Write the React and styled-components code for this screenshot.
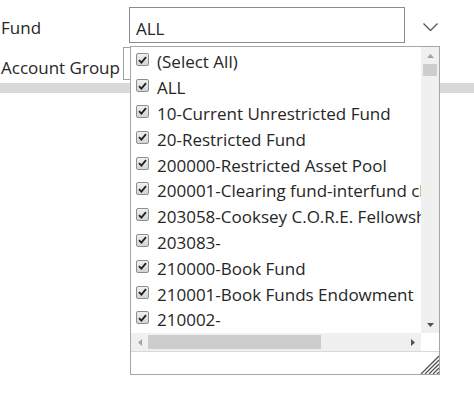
import React from "react";
import styled, { createGlobalStyle } from "styled-components";

const GlobalStyle = createGlobalStyle`
  html, body { margin: 0; padding: 0; background: #fff; }
  body { font-family: "Open Sans", "Noto Sans", sans-serif; color: #262626; }
  * { box-sizing: border-box; }
`;

const Page = styled.div`
  position: relative;
  width: 474px;
  height: 394px;
  overflow: hidden;
  padding-top: 7px;
`;

const Row = styled.div`
  display: flex;
  align-items: ${(p) => p.$align || "center"};
  margin-top: ${(p) => p.$mt || 0}px;
`;

const Label = styled.div`
  width: ${(p) => p.$w}px;
  padding-left: 1px;
  padding-top: ${(p) => p.$pt || 0}px;
  padding-bottom: ${(p) => p.$pb || 0}px;
  font-size: 17px;
  line-height: 22px;
  white-space: nowrap;
`;

const InputBox = styled.div`
  width: ${(p) => p.$w}px;
  height: ${(p) => p.$h}px;
  border: 1px solid ${(p) => p.$border || "#8c8c8c"};
  display: flex;
  align-items: center;
  padding-left: 6px;
  padding-top: 6px;
  font-size: 17px;
`;

const Chevron = styled.div`
  margin-left: 18px;
  padding-top: 4px;
  display: flex;
`;

const GrayBar = styled.div`
  margin-top: 3px;
  height: 10px;
  background: #d9d9d9;
`;

const Dropdown = styled.div`
  position: absolute;
  left: 130px;
  top: 46px;
  width: 310px;
  height: 329px;
  border: 1px solid #a6a6a6;
  background: #fff;
  display: grid;
  grid-template-columns: 290px 18px;
  grid-template-rows: 286px 18px 1fr;
`;

const List = styled.div`
  overflow: hidden;
  padding-top: 2px;
`;

const Item = styled.div`
  display: flex;
  align-items: center;
  height: 25.8px;
  padding-left: 5px;
  white-space: nowrap;
  font-size: 17px;
`;

const Check = styled.span`
  flex: none;
  width: 13px;
  height: 13px;
  border: 1px solid #8e8e8e;
  border-radius: 2px;
  background: linear-gradient(#f0f0f0, #d4d4d4);
  margin-right: 8px;
  margin-top: -4px;
  display: flex;
  align-items: center;
  justify-content: center;
`;

const VScroll = styled.div`
  background: #f0f0f0;
  display: flex;
  flex-direction: column;
  align-items: center;
  padding: 0 2px;
`;

const HScroll = styled.div`
  background: #f0f0f0;
  display: flex;
  align-items: center;
  padding: 2px 0;
`;

const ArrowCell = styled.div`
  flex: none;
  width: ${(p) => p.$w || 17}px;
  height: ${(p) => p.$h || 17}px;
  display: flex;
  align-items: center;
  justify-content: center;
`;

const Thumb = styled.div`
  background: #cdcdcd;
  flex: none;
`;

const Spacer = styled.div`
  flex: 1;
`;

const Corner = styled.div`
  background: #fff;
`;

const Footer = styled.div`
  grid-column: 1 / span 2;
  border-top: 1px solid #d9d9d9;
  display: flex;
  justify-content: flex-end;
  align-items: flex-end;
`;

const items = [
  "(Select All)",
  "ALL",
  "10-Current Unrestricted Fund",
  "20-Restricted Fund",
  "200000-Restricted Asset Pool",
  "200001-Clearing fund-interfund clearing",
  "203058-Cooksey C.O.R.E. Fellowship",
  "203083-",
  "210000-Book Fund",
  "210001-Book Funds Endowment",
  "210002-",
];

const Tick = () => (
  <svg width="9" height="8" viewBox="0 0 9 8">
    <path d="M1 4.2 L3.4 6.6 L8 1.2" fill="none" stroke="#222" strokeWidth="1.8" />
  </svg>
);

const Tri = ({ dir, color }) => {
  const d = {
    up: "M0 4 L3.5 0 L7 4 Z",
    down: "M0 0 L7 0 L3.5 4 Z",
    left: "M4 0 L4 7 L0 3.5 Z",
    right: "M0 0 L4 3.5 L0 7 Z",
  }[dir];
  const vertical = dir === "up" || dir === "down";
  return (
    <svg width={vertical ? 7 : 4} height={vertical ? 4 : 7} viewBox={vertical ? "0 0 7 4" : "0 0 4 7"}>
      <path d={d} fill={color} />
    </svg>
  );
};

const Grip = () => (
  <svg width="19" height="19" viewBox="0 0 19 19">
    <g stroke="#555" strokeWidth="1.3">
      <line x1="1" y1="19" x2="19" y2="1" />
      <line x1="5" y1="19" x2="19" y2="5" />
      <line x1="9" y1="19" x2="19" y2="9" />
      <line x1="13" y1="19" x2="19" y2="13" />
      <line x1="17" y1="19" x2="19" y2="17" />
    </g>
  </svg>
);

export default function App() {
  return (
    <>
      <GlobalStyle />
      <Page>
        <Row>
          <Label $w={129} $pt={6}>Fund</Label>
          <InputBox $w={276} $h={36}>ALL</InputBox>
          <Chevron>
            <svg width="15" height="8" viewBox="0 0 15 8">
              <path d="M0.5 0.5 L7.5 7.5 L14.5 0.5" fill="none" stroke="#555" strokeWidth="1.3" />
            </svg>
          </Chevron>
        </Row>
        <Row $mt={4} $align="flex-end">
          <Label $w={123} $pb={1}>Account Group</Label>
          <InputBox $w={60} $h={33} $border="#a0a0a0" />
        </Row>
        <GrayBar />
        <Dropdown>
          <List>
            {items.map((t) => (
              <Item key={t}>
                <Check>
                  <Tick />
                </Check>
                {t}
              </Item>
            ))}
          </List>
          <VScroll>
            <ArrowCell $h={17}>
              <Tri dir="up" color="#a3a3a3" />
            </ArrowCell>
            <Thumb style={{ width: 14, height: 12 }} />
            <Spacer />
            <ArrowCell $h={17}>
              <Tri dir="down" color="#505050" />
            </ArrowCell>
          </VScroll>
          <HScroll>
            <ArrowCell $w={17}>
              <Tri dir="left" color="#a3a3a3" />
            </ArrowCell>
            <Thumb style={{ width: 173, height: 14 }} />
            <Spacer />
            <ArrowCell $w={17}>
              <Tri dir="right" color="#505050" />
            </ArrowCell>
          </HScroll>
          <Corner />
          <Footer>
            <Grip />
          </Footer>
        </Dropdown>
      </Page>
    </>
  );
}
